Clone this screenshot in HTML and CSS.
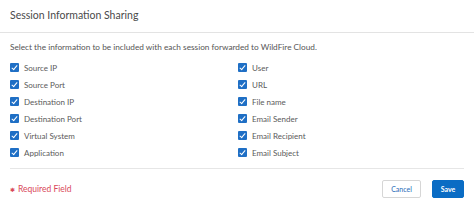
FILE: index.html
```html
<!DOCTYPE html>
<html lang="en">
<head>
    <meta charset="UTF-8">
    <title>Session Information Sharing</title>
    <link rel="stylesheet" href="styles.css">
</head>
<body>
    <div class="modal">
        <div class="modal-header">
            <h2>Session Information Sharing</h2>
        </div>

        <div class="modal-body">
            <p class="desc">Select the information to be included with each session forwarded to WildFire Cloud.</p>

            <div class="check-grid">
                <label class="check"><span class="box"></span>Source IP</label>
                <label class="check"><span class="box"></span>User</label>
                <label class="check"><span class="box"></span>Source Port</label>
                <label class="check"><span class="box"></span>URL</label>
                <label class="check"><span class="box"></span>Destination IP</label>
                <label class="check"><span class="box"></span>File name</label>
                <label class="check"><span class="box"></span>Destination Port</label>
                <label class="check"><span class="box"></span>Email Sender</label>
                <label class="check"><span class="box"></span>Virtual System</label>
                <label class="check"><span class="box"></span>Email Recipient</label>
                <label class="check"><span class="box"></span>Application</label>
                <label class="check"><span class="box"></span>Email Subject</label>
            </div>
        </div>

        <div class="modal-footer">
            <div class="required"><span class="star">&#10033;</span>Required Field</div>
            <div class="actions">
                <button class="btn btn-cancel">Cancel</button>
                <button class="btn btn-save">Save</button>
            </div>
        </div>
    </div>
</body>
</html>
```

FILE: styles.css
```css
* {
    margin: 0;
    padding: 0;
    box-sizing: border-box;
}

body {
    font-family: 'Lato', 'Liberation Sans', sans-serif;
    background: #fff;
    color: #555;
    width: 474px;
}

.modal-header {
    height: 33px;
    padding: 0 10px;
    display: flex;
    align-items: center;
    border-bottom: 1px solid #e3e3e3;
}

.modal-header h2 {
    font-size: 10.5px;
    font-weight: 400;
    color: #4a4a4a;
    margin-top: -2px;
}

.modal-body {
    margin: 0 10px;
    padding: 8px 0 7px;
    border-bottom: 1px solid #e6e6e6;
}

.desc {
    font-size: 8.25px;
    line-height: 12px;
    color: #555;
    margin-bottom: 6px;
}

.check-grid {
    display: grid;
    grid-template-columns: 228px 1fr;
}

.check {
    display: flex;
    align-items: center;
    height: 17px;
    font-size: 8px;
    color: #5a5a5a;
}

.box {
    width: 9px;
    height: 9px;
    margin-right: 5px;
    border-radius: 1px;
    background: #1f6fc5;
    position: relative;
}

.box:after {
    content: '';
    position: absolute;
    left: 3px;
    top: 1px;
    width: 2px;
    height: 5px;
    border: solid #fff;
    border-width: 0 1.5px 1.5px 0;
    transform: rotate(40deg);
}

.modal-footer {
    display: flex;
    justify-content: space-between;
    align-items: center;
    padding: 11px 10px 0;
}

.required {
    font-size: 8.5px;
    color: #d9485a;
    display: flex;
    align-items: center;
}

.star {
    font-size: 6px;
    margin-right: 3px;
}

.actions {
    display: flex;
    gap: 11px;
}

.btn {
    height: 18px;
    font-family: inherit;
    font-size: 7px;
    border-radius: 2px;
    cursor: pointer;
}

.btn-cancel {
    width: 39px;
    background: #fff;
    color: #2a6bb8;
    border: 1px solid #d6d6d6;
}

.btn-save {
    width: 32px;
    background: #0a6cc4;
    color: #fff;
    border: 1px solid #0a6cc4;
    font-weight: 700;
}
```
